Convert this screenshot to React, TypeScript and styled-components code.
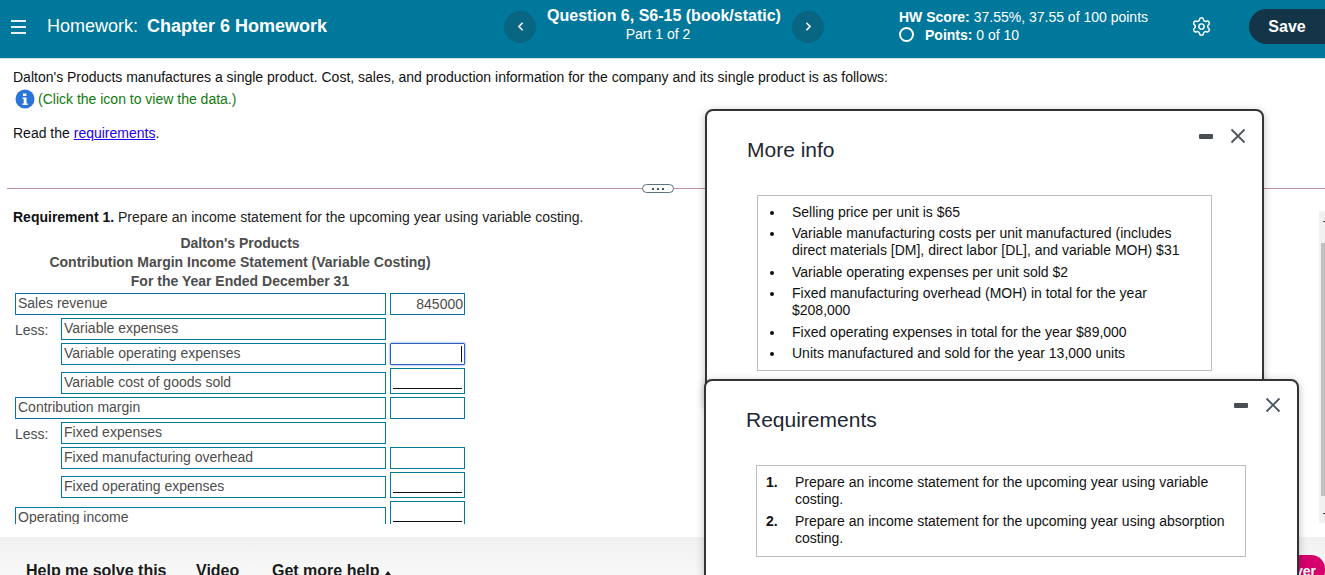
import React from "react";
import styled, { createGlobalStyle } from "styled-components";
import { ChevronLeft, ChevronRight, Settings } from "lucide-react";

const GlobalStyle = createGlobalStyle`
  html, body {
    margin: 0;
    padding: 0;
    height: 100%;
    overflow: hidden;
    background: #fff;
    font-family: "Liberation Sans", Arial, sans-serif;
  }
  * { box-sizing: border-box; }
`;

const Page = styled.div`
  position: relative;
  width: 1325px;
  height: 575px;
  overflow: hidden;
  display: flex;
  flex-direction: column;
`;

const Header = styled.header`
  height: 59px;
  flex: none;
  padding-bottom: 5px;
  background: #00789c;
  border-bottom: 1px solid #d3dde2;
  color: #fff;
  display: flex;
  align-items: center;
`;

const Burger = styled.div`
  width: 15px;
  height: 14px;
  margin-left: 11px;
  flex: none;
  border-top: 2px solid #e5f1f5;
  border-bottom: 2px solid #e5f1f5;
  position: relative;
  &::after {
    content: "";
    position: absolute;
    left: 0;
    right: 0;
    top: 4px;
    height: 2px;
    background: #e5f1f5;
  }
`;

const HwTitle = styled.div`
  margin-left: 21px;
  width: 457px;
  flex: none;
  font-size: 18px;
  b { margin-left: 4px; }
`;

const RoundNav = styled.div`
  width: 32px;
  height: 32px;
  flex: none;
  border-radius: 50%;
  background: #096683;
  display: flex;
  align-items: center;
  justify-content: center;
`;

const QuestionBox = styled.div`
  width: 256px;
  flex: none;
  margin-top: -3px;
  text-align: center;
  font-size: 14px;
  b { display: block; font-size: 16px; line-height: 19px; }
  span { display: block; line-height: 19px; padding-right: 12px; }
`;

const Score = styled.div`
  margin: -2px 0 0 75px;
  width: 292px;
  flex: none;
  font-size: 14px;
  line-height: 18px;
`;

const PointsRow = styled.div`
  display: flex;
  align-items: center;
  gap: 11px;
`;

const Ring = styled.i`
  width: 15px;
  height: 15px;
  border: 2px solid #fff;
  border-radius: 50%;
`;

const SaveButton = styled.div`
  margin-left: 37px;
  width: 76px;
  height: 35px;
  flex: none;
  border-radius: 18px 0 0 18px;
  background: #143447;
  font-size: 16px;
  font-weight: bold;
  display: flex;
  align-items: center;
  justify-content: center;
`;

const Intro = styled.div`
  height: 129px;
  flex: none;
  padding: 10px 13px 0;
  font-size: 14px;
  color: #111;
`;

const IntroLine = styled.div`
  line-height: 16px;
`;

const DataRow = styled.div`
  display: flex;
  align-items: center;
  gap: 3px;
  margin: 4px 0 0 2px;
  height: 20px;
  color: #107a10;
`;

const ReadLine = styled.div`
  margin-top: 16px;
  line-height: 16px;
  a { color: #2200ee; text-decoration: underline; }
`;

const Divider = styled.div`
  height: 1px;
  flex: none;
  margin-left: 7px;
  background: #c08fa3;
`;

const Grip = styled.div`
  position: absolute;
  left: 642px;
  top: 184px;
  width: 32px;
  height: 9px;
  background: #fff;
  border: 1.5px solid #5c7280;
  border-radius: 5px;
  display: flex;
  align-items: center;
  justify-content: center;
  gap: 3px;
`;

const GripDot = styled.i`
  width: 2px;
  height: 2px;
  background: #4a5560;
`;

const Work = styled.div`
  height: 335px;
  flex: none;
  padding: 20px 0 0 13px;
  overflow: hidden;
  font-size: 14px;
  color: #4d4d4d;
`;

const ReqLine = styled.div`
  line-height: 16px;
  color: #222;
  margin-bottom: 9px;
  b { color: #111; }
`;

const Heading = styled.div`
  width: 454px;
  text-align: center;
  font-weight: bold;
  line-height: 19px;
`;

const Row = styled.div<{ $mt: number }>`
  display: flex;
  align-items: flex-start;
  margin-top: ${(p) => p.$mt}px;
  width: 452px;
  margin-left: 2px;
`;

const Less = styled.div`
  width: 46px;
  flex: none;
  padding-top: 2px;
  line-height: 20px;
`;

const LabelBox = styled.div<{ $indent?: boolean; $up?: number }>`
  height: 22px;
  flex: none;
  width: ${(p) => (p.$indent ? 325 : 371)}px;
  margin-left: ${(p) => (p.$indent ? 46 : 0)}px;
  margin-top: ${(p) => p.$up || 0}px;
  border: 1px solid #007c98;
  padding: 0 2px;
  line-height: 18px;
  white-space: nowrap;
`;

const LessLabel = styled(LabelBox)`
  margin-left: 0;
`;

const ValueBox = styled.div<{ $focus?: boolean; $line?: boolean; $tall?: boolean }>`
  height: ${(p) => (p.$tall ? 26 : 22)}px;
  width: 75px;
  flex: none;
  margin-left: 4px;
  border: 1px solid ${(p) => (p.$focus ? "#2f62c9" : "#007c98")};
  box-shadow: ${(p) => (p.$focus ? "0 0 2px #2f62c9" : "none")};
  border-radius: ${(p) => (p.$focus ? 1 : 0)}px;
  text-align: right;
  padding: 0 1px;
  line-height: 20px;
  position: relative;
  ${(p) => p.$line && `
    &::after {
      content: "";
      position: absolute;
      left: 2px;
      right: 2px;
      bottom: 4px;
      height: 1px;
      background: #111;
    }
  `}
`;

const Caret = styled.i`
  position: absolute;
  right: 2px;
  top: 2px;
  width: 1px;
  height: 16px;
  background: #111;
`;

const Footer = styled.div`
  position: absolute;
  left: 0;
  right: 0;
  top: 537px;
  height: 38px;
  background: linear-gradient(#f1f1f1, #f8f8f8);
  display: flex;
  padding: 25px 0 0 26px;
  font-size: 16px;
  font-weight: bold;
  color: #1a1a1a;
  line-height: 18px;
  white-space: nowrap;
`;

const FooterLink = styled.div<{ $w?: number }>`
  width: ${(p) => (p.$w ? `${p.$w}px` : "auto")};
  display: flex;
`;

const MoreCaret = styled.i`
  width: 0;
  height: 0;
  margin: 9px 0 0 5px;
  border-left: 3.5px solid transparent;
  border-right: 3.5px solid transparent;
  border-bottom: 4px solid #1a1a1a;
`;

const AnswerPill = styled.div`
  position: absolute;
  left: 1280px;
  top: 555px;
  width: 45px;
  height: 30px;
  border-radius: 14px;
  background: #d6006c;
  color: #fff;
  font-size: 14px;
  font-weight: bold;
  text-align: right;
  padding: 8px 9px 0 0;
`;

const Scrollbar = styled.div`
  position: absolute;
  left: 1319px;
  top: 211px;
  width: 6px;
  height: 312px;
  background: #f1f1f1;
  &::before {
    content: "";
    position: absolute;
    left: 4px;
    top: 10px;
    width: 2px;
    height: 1px;
    background: #444;
    box-shadow: 0 292px #444;
  }
  &::after {
    content: "";
    position: absolute;
    left: 2px;
    right: 0;
    top: 32px;
    height: 253px;
    background: #c1c1c1;
  }
`;

const Dialog = styled.div<{ $left: number; $top: number; $w: number; $h: number }>`
  position: absolute;
  left: ${(p) => p.$left}px;
  top: ${(p) => p.$top}px;
  width: ${(p) => p.$w}px;
  height: ${(p) => p.$h}px;
  background: #fff;
  border: 2px solid #333;
  border-radius: 8px;
  box-shadow: 0 2px 8px rgba(0, 0, 0, 0.25);
  color: #111;
`;

const DialogTitle = styled.div<{ $top: number; $left: number }>`
  padding: ${(p) => p.$top}px 0 0 ${(p) => p.$left}px;
  font-size: 21px;
  line-height: 24px;
  color: #1c2733;
`;

const DialogControls = styled.div<{ $top: number; $right: number }>`
  position: absolute;
  top: ${(p) => p.$top}px;
  right: ${(p) => p.$right}px;
  display: flex;
  align-items: center;
  gap: 17px;
`;

const Minimize = styled.i`
  width: 14px;
  height: 5px;
  border-radius: 1px;
  background: #4a4f55;
  margin-top: 1px;
`;

const InfoBox = styled.div<{ $mt: number; $ml: number; $w: number; $h: number }>`
  margin: ${(p) => p.$mt}px 0 0 ${(p) => p.$ml}px;
  width: ${(p) => p.$w}px;
  height: ${(p) => p.$h}px;
  border: 1px solid #bdbdbd;
  font-size: 14px;
  line-height: 17px;
`;

const BulletList = styled.ul`
  margin: 8px 0 0;
  padding: 0 0 0 34px;
  list-style: none;
  li {
    position: relative;
    margin-bottom: 4.4px;
    padding-right: 18px;
  }
  li::before {
    content: "";
    position: absolute;
    left: -22px;
    top: 7px;
    width: 4px;
    height: 4px;
    border-radius: 50%;
    background: #111;
  }
`;

const NumberList = styled.ol`
  margin: 8px 0 0;
  padding: 0;
  list-style: none;
  li {
    display: flex;
    margin-bottom: 5px;
    padding-right: 18px;
  }
  b { width: 38px; flex: none; padding-left: 9px; }
`;

const XIcon = () => (
  <svg width="16" height="16" viewBox="0 0 16 16">
    <path d="M1.5 1.5 L14.5 14.5 M14.5 1.5 L1.5 14.5" stroke="#4a5560" strokeWidth="1.8" fill="none" />
  </svg>
);

const InfoIcon = () => (
  <svg width="20" height="20" viewBox="0 0 20 20">
    <circle cx="10" cy="10" r="9.5" fill="#2b74d8" />
    <path d="M8 4.5h3.4v2.6H8z M7.6 8.5h3.9v6h1.2v1.6H7.5v-1.6h1.2v-4.4H7.6z" fill="#fff" />
  </svg>
);

export default function App() {
  return (
    <Page>
      <GlobalStyle />
      <Header>
        <Burger />
        <HwTitle>
          Homework: <b>Chapter 6 Homework</b>
        </HwTitle>
        <RoundNav>
          <ChevronLeft size={13} strokeWidth={3} />
        </RoundNav>
        <QuestionBox>
          <b>Question 6, S6-15 (book/static)</b>
          <span>Part 1 of 2</span>
        </QuestionBox>
        <RoundNav>
          <ChevronRight size={13} strokeWidth={3} />
        </RoundNav>
        <Score>
          <div>
            <b>HW Score:</b> 37.55%, 37.55 of 100 points
          </div>
          <PointsRow>
            <Ring />
            <div>
              <b>Points:</b> 0 of 10
            </div>
          </PointsRow>
        </Score>
        <Settings size={21} strokeWidth={1.7} />
        <SaveButton>Save</SaveButton>
      </Header>

      <Intro>
        <IntroLine>
          Dalton's Products manufactures a single product. Cost, sales, and production information for the company and its single product is as follows:
        </IntroLine>
        <DataRow>
          <InfoIcon />
          (Click the icon to view the data.)
        </DataRow>
        <ReadLine>
          Read the <a href="#req">requirements</a>.
        </ReadLine>
      </Intro>
      <Divider />
      <Grip>
        <GripDot />
        <GripDot />
        <GripDot />
      </Grip>

      <Work>
        <ReqLine>
          <b>Requirement 1.</b> Prepare an income statement for the upcoming year using variable costing.
        </ReqLine>
        <Heading>Dalton's Products</Heading>
        <Heading>Contribution Margin Income Statement (Variable Costing)</Heading>
        <Heading>For the Year Ended December 31</Heading>
        <Row $mt={2}>
          <LabelBox>Sales revenue</LabelBox>
          <ValueBox>845000</ValueBox>
        </Row>
        <Row $mt={3}>
          <Less>Less:</Less>
          <LessLabel $indent>Variable expenses</LessLabel>
        </Row>
        <Row $mt={3}>
          <LabelBox $indent>Variable operating expenses</LabelBox>
          <ValueBox $focus>
            <Caret />
          </ValueBox>
        </Row>
        <Row $mt={3}>
          <LabelBox $indent $up={4}>Variable cost of goods sold</LabelBox>
          <ValueBox $line $tall />
        </Row>
        <Row $mt={3}>
          <LabelBox>Contribution margin</LabelBox>
          <ValueBox />
        </Row>
        <Row $mt={3}>
          <Less>Less:</Less>
          <LessLabel $indent>Fixed expenses</LessLabel>
        </Row>
        <Row $mt={3}>
          <LabelBox $indent>Fixed manufacturing overhead</LabelBox>
          <ValueBox />
        </Row>
        <Row $mt={3}>
          <LabelBox $indent $up={4}>Fixed operating expenses</LabelBox>
          <ValueBox $line $tall />
        </Row>
        <Row $mt={3}>
          <LabelBox $up={6}>Operating income</LabelBox>
          <ValueBox $line $tall />
        </Row>
      </Work>

      <Footer>
        <FooterLink $w={170}>Help me solve this</FooterLink>
        <FooterLink $w={76}>Video</FooterLink>
        <FooterLink>
          Get more help
          <MoreCaret />
        </FooterLink>
      </Footer>
      <AnswerPill>ver</AnswerPill>
      <Scrollbar />

      <Dialog $left={705} $top={109} $w={559} $h={300}>
        <DialogControls $top={17} $right={16}>
          <Minimize />
          <XIcon />
        </DialogControls>
        <DialogTitle $top={27} $left={40}>More info</DialogTitle>
        <InfoBox $mt={33} $ml={50} $w={455} $h={176}>
          <BulletList>
            <li>Selling price per unit is $65</li>
            <li>Variable manufacturing costs per unit manufactured (includes direct materials [DM], direct labor [DL], and variable MOH) $31</li>
            <li>Variable operating expenses per unit sold $2</li>
            <li>Fixed manufacturing overhead (MOH) in total for the year $208,000</li>
            <li>Fixed operating expenses in total for the year $89,000</li>
            <li>Units manufactured and sold for the year 13,000 units</li>
          </BulletList>
        </InfoBox>
      </Dialog>

      <Dialog $left={704} $top={379} $w={595} $h={220}>
        <DialogControls $top={16} $right={16}>
          <Minimize />
          <XIcon />
        </DialogControls>
        <DialogTitle $top={27} $left={40}>Requirements</DialogTitle>
        <InfoBox $mt={33} $ml={50} $w={490} $h={92}>
          <NumberList>
            <li>
              <b>1.</b>
              <span>Prepare an income statement for the upcoming year using variable costing.</span>
            </li>
            <li>
              <b>2.</b>
              <span>Prepare an income statement for the upcoming year using absorption costing.</span>
            </li>
          </NumberList>
        </InfoBox>
      </Dialog>
    </Page>
  );
}
